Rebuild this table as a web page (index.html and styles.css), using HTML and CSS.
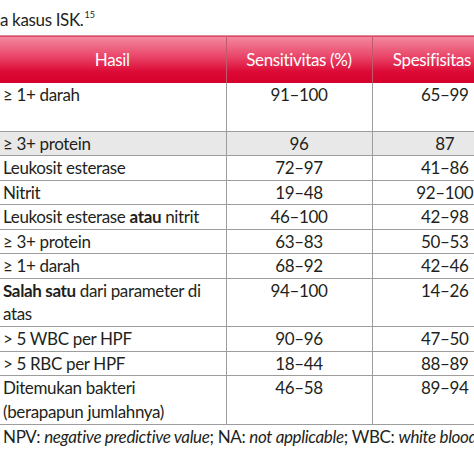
FILE: index.html
```html
<!DOCTYPE html>
<html>
<head>
<meta charset="utf-8">
<link rel="stylesheet" href="styles.css">
</head>
<body>
<div class="page">
  <p class="caption">a kasus ISK.<sup>15</sup></p>
  <table class="tbl">
    <colgroup>
      <col class="c1"><col class="c2"><col class="c3">
    </colgroup>
    <thead>
      <tr><th>Hasil</th><th>Sensitivitas (%)</th><th>Spesifisitas (%)</th></tr>
    </thead>
    <tbody>
      <tr class="tall"><td>≥ 1+ darah</td><td class="num">91–100</td><td class="num">65–99</td></tr>
      <tr class="grey"><td>≥ 3+ protein</td><td class="num">96</td><td class="num">87</td></tr>
      <tr><td>Leukosit esterase</td><td class="num">72–97</td><td class="num">41–86</td></tr>
      <tr><td>Nitrit</td><td class="num">19–48</td><td class="num">92–100</td></tr>
      <tr><td>Leukosit esterase <b>atau</b> nitrit</td><td class="num">46–100</td><td class="num">42–98</td></tr>
      <tr><td>≥ 3+ protein</td><td class="num">63–83</td><td class="num">50–53</td></tr>
      <tr><td>≥ 1+ darah</td><td class="num">68–92</td><td class="num">42–46</td></tr>
      <tr class="tall"><td><b>Salah satu</b> dari parameter di<br>atas</td><td class="num">94–100</td><td class="num">14–26</td></tr>
      <tr><td>&gt; 5 WBC per HPF</td><td class="num">90–96</td><td class="num">47–50</td></tr>
      <tr><td>&gt; 5 RBC per HPF</td><td class="num">18–44</td><td class="num">88–89</td></tr>
      <tr class="tall"><td>Ditemukan bakteri<br>(berapapun jumlahnya)</td><td class="num">46–58</td><td class="num">89–94</td></tr>
    </tbody>
  </table>
  <p class="note">NPV: <i>negative predictive value</i>; NA: <i>not applicable</i>; WBC: <i>white blood cell</i>; RBC: <i>red blood cell</i></p>
</div>
</body>
</html>
```
FILE: styles.css
```css
html, body {
  margin: 0;
  padding: 0;
  background: #fff;
  overflow: hidden;
}
body {
  width: 474px;
  height: 474px;
  font-family: Lato, "Open Sans", sans-serif;
  font-size: 17px;
  letter-spacing: -0.35px;
  color: #231f20;
}
.page {
  width: 600px;
}
.caption {
  margin: 0;
  padding: 9px 0 0 0;
  height: 31px;
  line-height: 22px;
  box-sizing: border-box;
}
.caption sup {
  font-size: 9px;
  vertical-align: top;
  line-height: 12px;
  margin-left: 1px;
  letter-spacing: 0;
}
.tbl {
  border-collapse: collapse;
  table-layout: fixed;
  width: 518px;
  margin-top: 4px;
  margin-left: -1px;
}
.c1 { width: 227px; }
.c2 { width: 146px; }
.c3 { width: 145px; }
.tbl th {
  height: 47px;
  padding: 0;
  font-weight: normal;
  color: #fff;
  background: linear-gradient(to bottom, #f28aa0 0%, #ea4a6c 40%, #dc0a36 75%, #d6002c 100%);
  border-left: 1px solid #c25a6e;
  border-top: 1px solid #d98a99;
  text-align: center;
  vertical-align: middle;
}
.tbl th:first-child { border-left: none; }
.tbl td {
  padding: 0 0 0 4px;
  height: 23.4px;
  line-height: 23.5px;
  vertical-align: top;
  border-bottom: 1px solid #9d9d9d;
  border-left: 1px solid #9d9d9d;
}
.tbl td:first-child { border-left: none; }
.tbl td.num {
  text-align: center;
  padding: 0;
}
.tbl tr.tall td { height: 47.7px; }
.tbl tr.grey td { background: #e8e8e8; }
.tbl td b { font-weight: bold; }
.note {
  margin: 0;
  padding: 0 0 0 3px;
  line-height: 24px;
  white-space: nowrap;
}
```
